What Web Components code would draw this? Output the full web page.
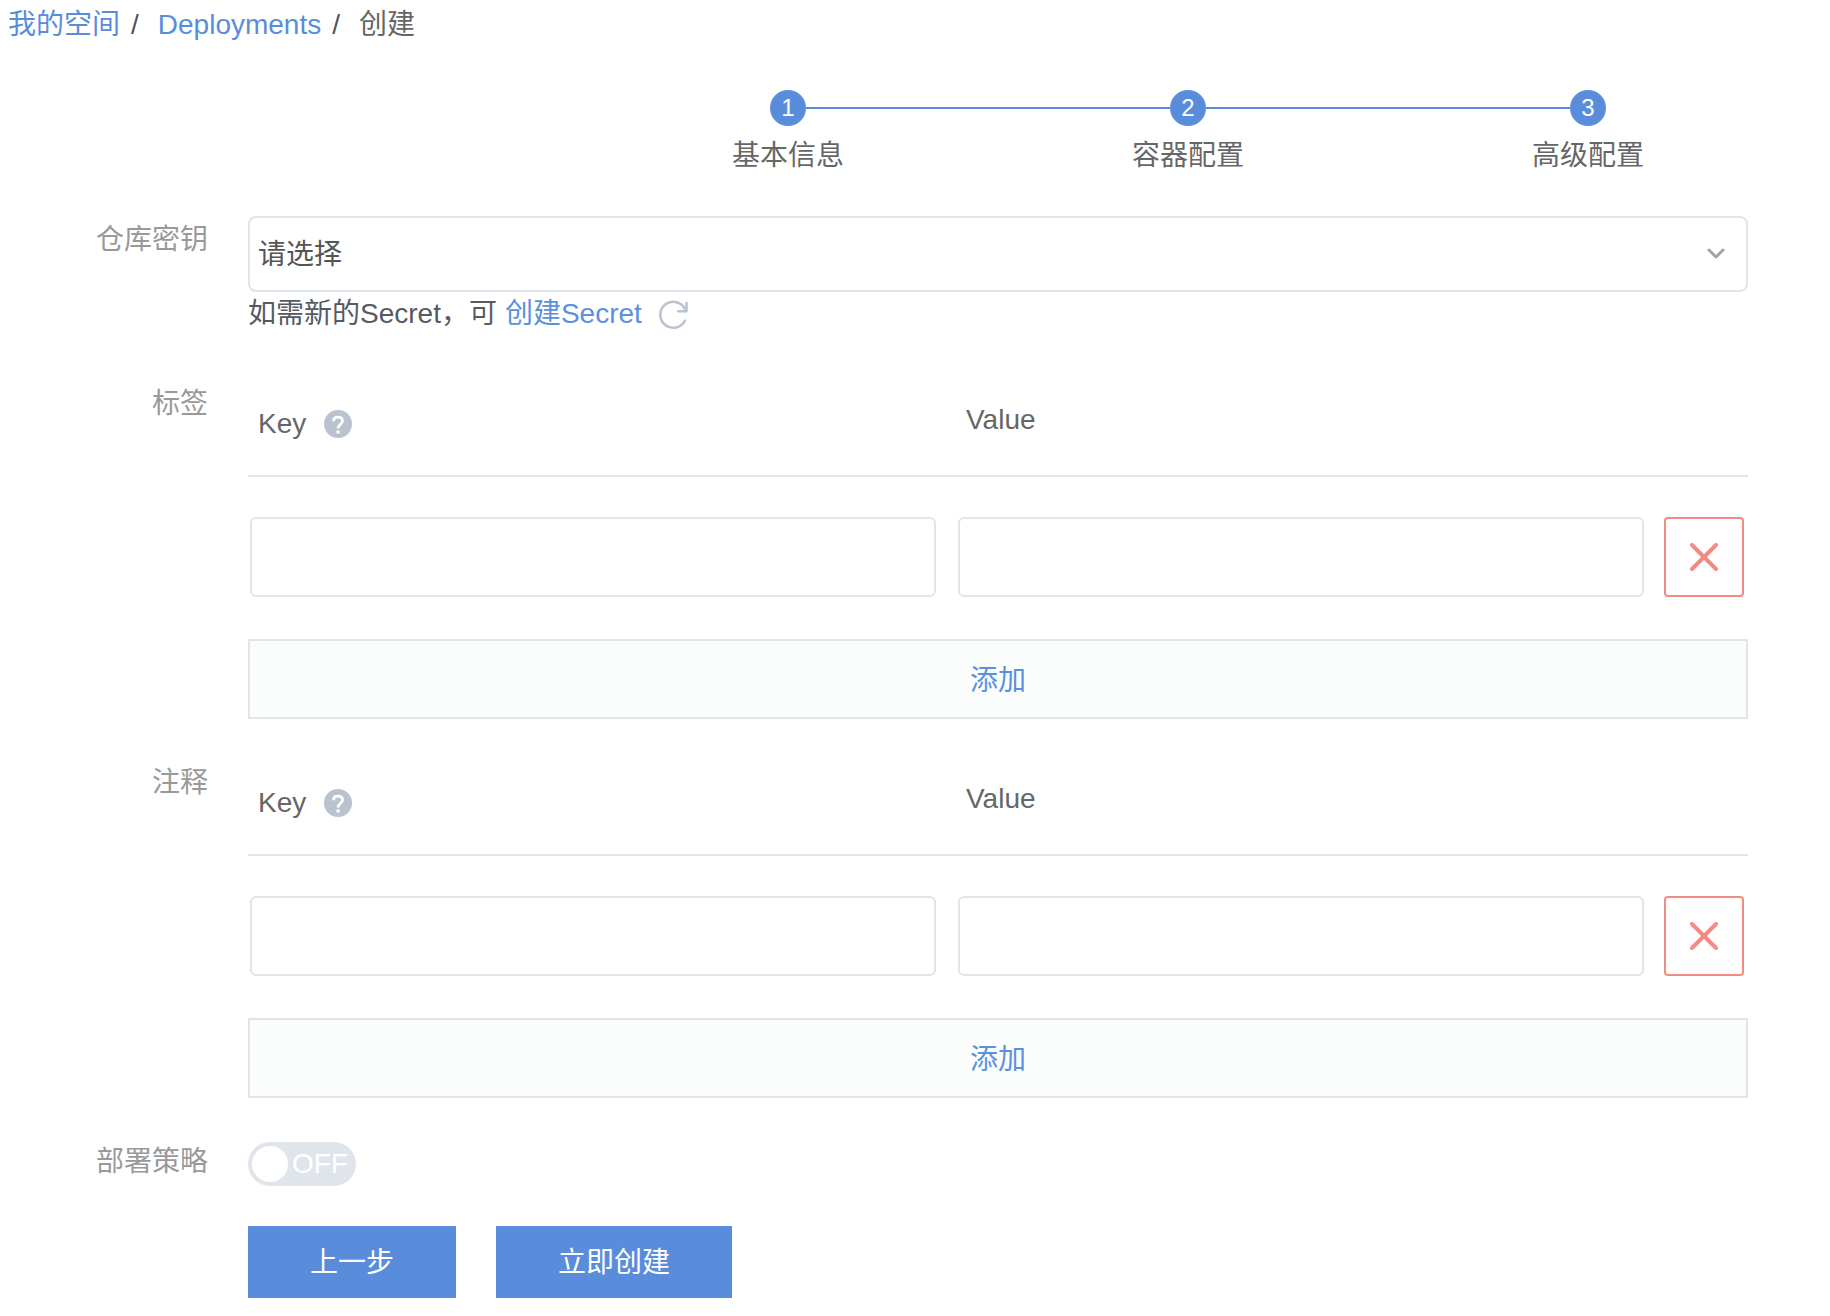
<!DOCTYPE html>
<html lang="zh-CN">
<head>
<meta charset="utf-8">
<title>创建 Deployment</title>
<style>
:root {
  --blue: #5a8cdc;
  --link: #5a90dc;
  --line: #e0e5ec;
  --icon: #bbc2cf;
  --red: #f48b82;
}
body {
  margin: 0;
  background: #fff;
  color: #666;
  font: 28px/44px "Liberation Sans", "Noto Sans CJK SC", sans-serif;
}
main {
  display: flex;
  flex-direction: column;
  gap: 40px;
  padding: 38px 82px 18px 0;
}
.actions {
  display: flex;
  gap: 40px;
}
</style>
</head>
<body>

<bread-crumb>
  <a href="#space">我的空间</a>
  <a href="#deployments">Deployments</a>
  <span>创建</span>
</bread-crumb>

<step-bar>
  <step-item number="1">基本信息</step-item>
  <step-item number="2">容器配置</step-item>
  <step-item number="3">高级配置</step-item>
</step-bar>

<main>
  <form-row>
    <label slot="label" for="secret">仓库密钥</label>
    <select-box>
      <select id="secret"><option>请选择</option></select>
    </select-box>
    <secret-hint></secret-hint>
  </form-row>
  <form-row>
    <span slot="label">标签</span>
    <key-value-table name="标签"></key-value-table>
  </form-row>
  <form-row>
    <span slot="label">注释</span>
    <key-value-table name="注释"></key-value-table>
  </form-row>
  <form-row>
    <label slot="label" for="strategy">部署策略</label>
    <toggle-switch><input type="checkbox" id="strategy"></toggle-switch>
  </form-row>
  <form-row>
    <div class="actions">
      <blue-button>上一步</blue-button>
      <blue-button>立即创建</blue-button>
    </div>
  </form-row>
</main>

<script>
// attach an open shadow root filled with the given markup
function render(el, html) {
  const $template = document.createElement('template');
  $template.innerHTML = html;
  el.attachShadow({mode: 'open'});
  el.shadowRoot.appendChild($template.content.cloneNode(true));
}

class BreadCrumb extends HTMLElement {
  constructor() {
    super();
    render(this, `
<style>
:host {
  display: block;
  padding: 0 8px;
  line-height: 50px;
}
nav {
  display: flex;
}
::slotted(a) {
  color: var(--blue);
  text-decoration: none;
}
.sep {
  margin: 0 19px 0 11px;
  color: #50545c;
}
</style>
<nav aria-label="breadcrumb"></nav>
`);
  }

  connectedCallback() {
    const nav = this.shadowRoot.querySelector('nav');
    if (nav.childElementCount) return;
    [...this.children].forEach((item, i) => {
      if (i > 0) {
        const sep = document.createElement('span');
        sep.className = 'sep';
        sep.textContent = '/';
        nav.appendChild(sep);
      }
      const slot = document.createElement('slot');
      slot.name = 'item' + i;
      item.slot = slot.name;
      nav.appendChild(slot);
    });
  }
}

class StepBar extends HTMLElement {
  constructor() {
    super();
    render(this, `
<style>
:host {
  display: block;
  padding: 40px 42px 0 0;
}
div {
  display: flex;
  max-width: 1200px;
  margin-left: auto;
}
::slotted(*) {
  flex: 1;
}
</style>
<div role="list"><slot></slot></div>
`);
  }
}

class StepItem extends HTMLElement {
  constructor() {
    super();
    render(this, `
<style>
:host {
  display: block;
  text-align: center;
}
.head {
  display: flex;
  align-items: center;
  margin-bottom: 8px;
}
.head::before, .head::after {
  content: "";
  flex: 1;
  height: 2px;
  background: var(--blue);
}
:host(:first-child) .head::before, :host(:last-child) .head::after {
  background: none;
}
.num {
  width: 36px;
  height: 36px;
  border-radius: 50%;
  background: var(--blue);
  color: #fff;
  font-size: 24px;
  line-height: 36px;
}
</style>
<div class="head"><span class="num"></span></div>
<slot></slot>
`);
    this.shadowRoot.querySelector('.num').textContent = this.getAttribute('number');
  }

  connectedCallback() {
    this.setAttribute('role', 'listitem');
  }
}

class FormRow extends HTMLElement {
  constructor() {
    super();
    render(this, `
<style>
:host {
  display: grid;
  grid-template-columns: 208px minmax(0, 1fr);
  column-gap: 40px;
}
.label {
  padding-top: 2px;
  color: #999;
  text-align: right;
}
</style>
<div class="label"><slot name="label"></slot></div>
<div><slot></slot></div>
`);
  }
}

class SelectBox extends HTMLElement {
  constructor() {
    super();
    render(this, `
<style>
:host {
  display: grid;
  align-items: center;
}
::slotted(select) {
  grid-area: 1 / 1;
  appearance: none;
  box-sizing: border-box;
  width: 100%;
  height: 76px;
  padding: 2px 60px 0 8px;
  border: 2px solid var(--line);
  border-radius: 8px;
  background: #fff;
  color: #555;
  font: inherit;
}
svg {
  grid-area: 1 / 1;
  justify-self: end;
  margin-right: 22px;
  z-index: 1;
  pointer-events: none;
}
</style>
<slot></slot>
<svg width="20" height="14" viewBox="0 0 20 14" fill="none" stroke="#a3a3a3" stroke-width="3" stroke-linecap="round" stroke-linejoin="round"><path d="M3 3l7 7 7-7"/></svg>
`);
  }
}

class SecretHint extends HTMLElement {
  constructor() {
    super();
    render(this, `
<style>
:host {
  display: flex;
  align-items: center;
  padding-bottom: 4px;
  color: #555a63;
}
a {
  margin: 0 16px 0 8px;
  color: var(--link);
  text-decoration: none;
}
button {
  display: block;
  padding: 2px 0 0;
  border: 0;
  background: none;
  cursor: pointer;
}
svg {
  display: block;
}
</style>
<span>如需新的Secret，可</span>
<a href="#secret">创建Secret</a>
<button type="button" aria-label="刷新">
  <svg width="30" height="30" viewBox="0 0 30 30" fill="none" stroke="var(--icon)" stroke-width="2.500" stroke-linecap="round" stroke-linejoin="round">
    <path d="M27 20.500A13 13 0 1 1 26.500 8.200L28 11"/>
    <path d="M28.500 3v8.200h-8.200"/>
  </svg>
</button>
`);
  }
}

class KeyValueTable extends HTMLElement {
  constructor() {
    super();
    render(this, `
<style>
:host {
  display: block;
}
table {
  width: 100%;
  table-layout: fixed;
  border-spacing: 0;
}
th {
  box-sizing: border-box;
  height: 97px;
  padding: 20px 10px 0;
  border-bottom: 2px solid var(--line);
  font-weight: normal;
  line-height: 40px;
  text-align: left;
  vertical-align: top;
}
.last {
  width: 84px;
  padding: 20px 0 0;
}
.key {
  display: flex;
  align-items: center;
  gap: 18px;
  height: 48px;
}
td {
  padding: 40px 20px 42px 2px;
}
td:last-child {
  padding-left: 0;
  padding-right: 0;
}
input, button {
  display: block;
  box-sizing: border-box;
  height: 80px;
  font: inherit;
}
input {
  width: 100%;
  padding: 0 10px;
  border: 2px solid var(--line);
  border-radius: 6px;
  color: #555;
}
.remove {
  width: 80px;
  padding: 0 24px;
  border: 2px solid var(--red);
  border-radius: 4px;
  background: #fff;
  cursor: pointer;
}
.remove svg {
  display: block;
}
.add {
  width: 100%;
  padding: 4px 0 0;
  border: 2px solid var(--line);
  background: #fbfdfc;
  color: var(--link);
  cursor: pointer;
}
</style>
<table>
  <thead>
    <tr>
      <th><div class="key">Key
        <svg width="28" height="28" viewBox="0 0 28 28"><circle cx="14" cy="14" r="14" fill="var(--icon)"/><path d="M9.500 11.200C9.500 8.500 11.400 7.200 14 7.200s4.500 1.500 4.500 3.900c0 3.300-4.500 3.600-4.500 7.300" fill="none" stroke="#fff" stroke-width="2.800"/><path fill="#fff" d="M12.500 20.500h3.200v3h-3.200z"/></svg>
      </div></th>
      <th>Value</th>
      <th class="last"></th>
    </tr>
  </thead>
  <tbody></tbody>
</table>
<button type="button" class="add">添加</button>
`);
    this.addRow();
  }

  addRow() {
    const name = this.getAttribute('name');
    const row = document.createElement('tr');
    row.innerHTML = `
      <td><input type="text" aria-label="${name} Key"></td>
      <td><input type="text" aria-label="${name} Value"></td>
      <td><button type="button" class="remove" aria-label="删除">
        <svg width="28" height="28" viewBox="0 0 28 28" stroke="var(--red)" stroke-width="4" stroke-linecap="round"><path d="M2 2l24 24M26 2 2 26"/></svg>
      </button></td>`;
    row.querySelector('.remove').addEventListener('click', () => row.remove());
    this.shadowRoot.querySelector('tbody').appendChild(row);
  }

  connectedCallback() {
    this.shadowRoot.querySelector('.add').addEventListener('click', () => this.addRow());
  }
}

class ToggleSwitch extends HTMLElement {
  constructor() {
    super();
    render(this, `
<style>
:host {
  display: flex;
  align-items: center;
  position: relative;
  box-sizing: border-box;
  width: 108px;
  height: 44px;
  margin-top: 4px;
  padding: 4px;
  gap: 4px;
  border-radius: 22px;
  background: var(--line);
  color: #fff;
}
:host([on]) {
  flex-direction: row-reverse;
  background: var(--blue);
}
.knob {
  width: 36px;
  height: 36px;
  border-radius: 50%;
  background: #fff;
}
/* the real tick box lies invisibly over the pill */
::slotted(input) {
  position: absolute;
  inset: 0;
  width: 100%;
  height: 100%;
  margin: 0;
  opacity: 0;
  cursor: pointer;
}
</style>
<span class="knob"></span>
<span class="text">OFF</span>
<slot></slot>
`);
  }

  connectedCallback() {
    this.addEventListener('change', (e) => {
      this.toggleAttribute('on', e.target.checked);
      this.shadowRoot.querySelector('.text').textContent = e.target.checked ? 'ON' : 'OFF';
    });
  }
}

class BlueButton extends HTMLElement {
  constructor() {
    super();
    render(this, `
<style>
:host {
  display: block;
}
button {
  display: block;
  height: 72px;
  padding: 2px 62px 0;
  border: 0;
  background: var(--blue);
  color: #fff;
  font: inherit;
  cursor: pointer;
}
</style>
<button type="button"><slot></slot></button>
`);
  }
}

customElements.define('bread-crumb', BreadCrumb);
customElements.define('step-bar', StepBar);
customElements.define('step-item', StepItem);
customElements.define('form-row', FormRow);
customElements.define('select-box', SelectBox);
customElements.define('secret-hint', SecretHint);
customElements.define('key-value-table', KeyValueTable);
customElements.define('toggle-switch', ToggleSwitch);
customElements.define('blue-button', BlueButton);
</script>
</body>
</html>
